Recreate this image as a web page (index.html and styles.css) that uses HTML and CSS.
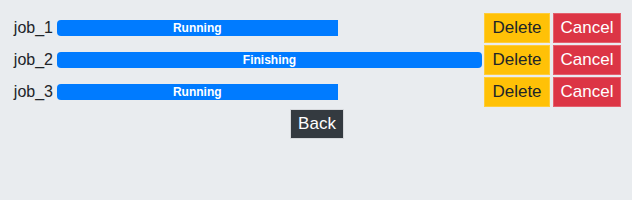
FILE: index.html
```html
<!DOCTYPE html>
<html lang="en">

<head>
    <meta charset="UTF-8">
    <title>Jobs</title>
    <link rel="stylesheet" href="styles.css">
</head>

<body>
    <div class="jobs">
        <div class="job">
            <span class="job-name">job_1</span>
            <div class="progress">
                <div class="progress-bar" style="width: 66%">Running</div>
            </div>
            <div class="actions">
                <button class="btn btn-delete">Delete</button>
                <button class="btn btn-cancel">Cancel</button>
            </div>
        </div>
        <div class="job">
            <span class="job-name">job_2</span>
            <div class="progress">
                <div class="progress-bar" style="width: 100%">Finishing</div>
            </div>
            <div class="actions">
                <button class="btn btn-delete">Delete</button>
                <button class="btn btn-cancel">Cancel</button>
            </div>
        </div>
        <div class="job">
            <span class="job-name">job_3</span>
            <div class="progress">
                <div class="progress-bar" style="width: 66%">Running</div>
            </div>
            <div class="actions">
                <button class="btn btn-delete">Delete</button>
                <button class="btn btn-cancel">Cancel</button>
            </div>
        </div>
        <div class="footer">
            <button class="btn btn-back">Back</button>
        </div>
    </div>
</body>

</html>
```

FILE: styles.css
```css
body {
    margin: 0;
    background-color: #e9ecef;
    font-family: "Liberation Sans", Arial, sans-serif;
    color: #212529;
}

.jobs {
    width: 608px;
    padding: 13px 0 0 13px;
    display: flex;
    flex-direction: column;
    gap: 2px;
}

.job {
    display: flex;
    align-items: center;
    height: 30px;
}

.job-name {
    width: 40px;
    margin-right: 4px;
    text-align: right;
    font-size: 16px;
}

.progress {
    width: 425px;
    height: 16px;
    border-radius: 4px;
    overflow: hidden;
    background-color: #e9ecef;
    display: flex;
}

.progress-bar {
    background-color: #007bff;
    color: #fff;
    font-size: 12px;
    font-weight: bold;
    line-height: 16px;
    text-align: center;
}

.actions {
    display: flex;
    gap: 3px;
    margin-left: 2px;
}

.btn {
    height: 30px;
    padding: 0;
    border: 1px solid;
    border-radius: 0;
    font-family: inherit;
    font-size: 17px;
    cursor: pointer;
}

.btn-delete {
    width: 66px;
    background-color: #ffc107;
    border-color: #ffcd39;
    color: #212529;
}

.btn-cancel {
    width: 68px;
    background-color: #dc3545;
    border-color: #e4606d;
    color: #fff;
}

.footer {
    display: flex;
    justify-content: center;
}

.btn-back {
    width: 54px;
    background-color: #343a40;
    border-color: #d6d8db;
    color: #fff;
}
```
